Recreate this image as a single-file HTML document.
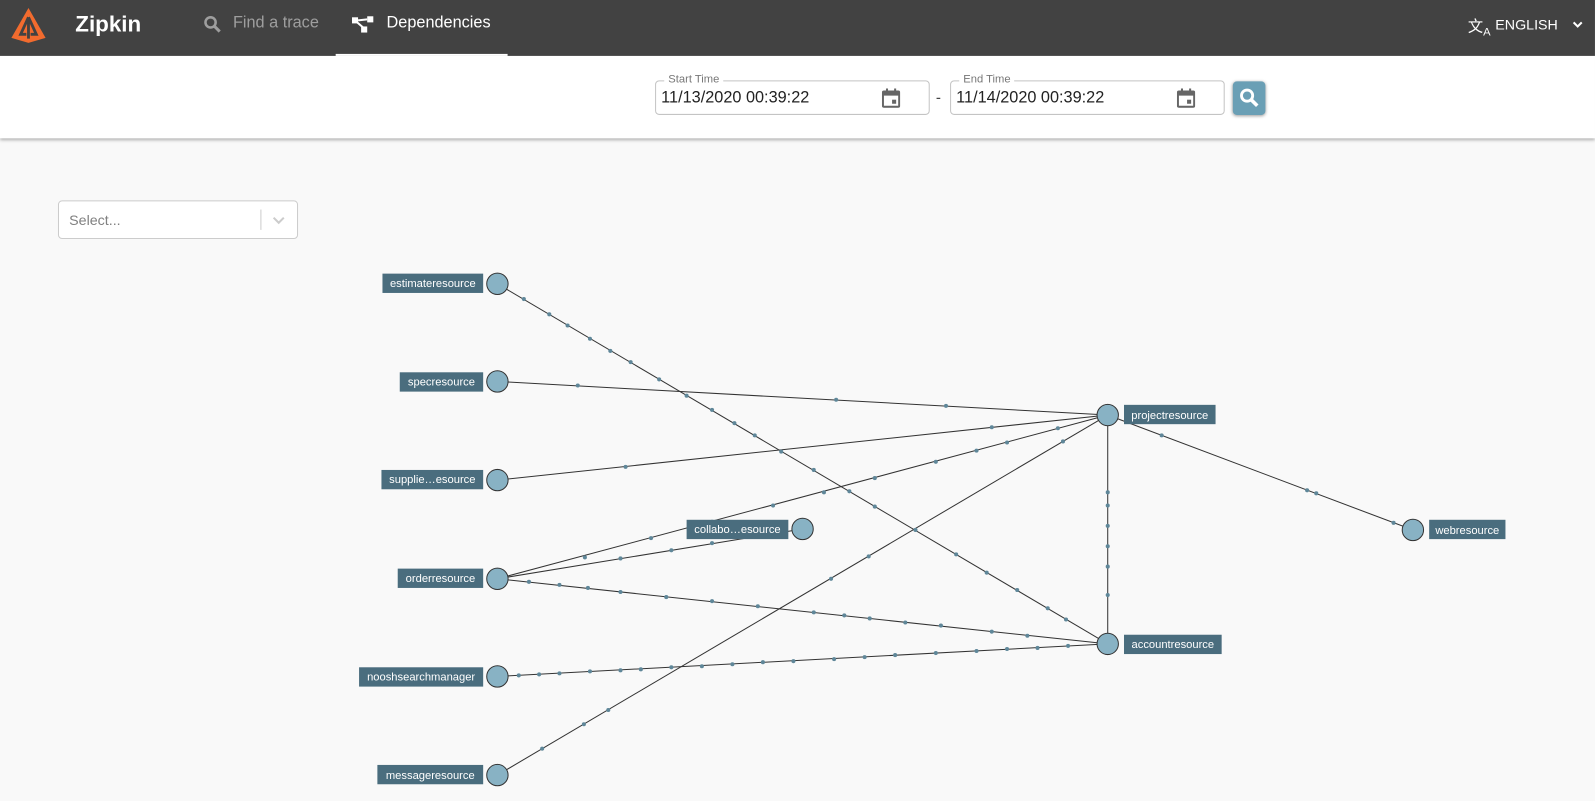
<!DOCTYPE html>
<html><head><meta charset="utf-8"><style>
*{box-sizing:border-box;margin:0;padding:0}
html,body{width:1595px;height:801px;overflow:hidden}
body{background:#f9f9f9;font-family:"Liberation Sans",Arial,sans-serif;position:relative}
#w{position:absolute;left:0;top:0;width:1568px;height:788px;transform:scale(1.0172);transform-origin:0 0}
.top{position:absolute;left:0;top:0;width:1568px;height:55px;background:#424242;color:#fff}
.brand{position:absolute;left:74px;top:11px;font-size:22px;font-weight:bold}
.find{position:absolute;left:198px;top:14px;font-size:16px;color:#9e9e9e}
.dep{position:absolute;left:330px;top:0;width:169px;height:55px;border-bottom:2px solid #fff}
.dep span{position:absolute;left:50px;top:14px;font-size:16px}
.lang{position:absolute;left:1470px;top:16px;font-size:14px}
.bar{position:absolute;left:0;top:55px;width:1568px;height:81px;background:#fff;box-shadow:0 2px 3px rgba(0,0,0,.3)}
.field{position:absolute;top:79px;height:34px;border:1px solid #c4c4c4;border-radius:4px;background:#fff}
.field .v{position:absolute;left:5px;top:8px;font-size:16px;color:#222}
.field .l{position:absolute;left:8px;top:-8px;font-size:11px;color:#777;background:#fff;padding:0 4px}
.cal{position:absolute;right:28px;top:7px;width:18px;height:19px}
.sbtn{position:absolute;left:1212px;top:80px;width:32px;height:33px;background:#6a9fb5;border-radius:4px;box-shadow:0 1px 3px rgba(0,0,0,.4)}
.sel{position:absolute;left:57px;top:197px;width:236px;height:38px;border:1px solid #ccc;border-radius:4px;background:#fff}
.sel span{position:absolute;left:10px;top:10px;font-size:14px;color:#808080}
.sel i{position:absolute;left:198px;top:8px;width:1px;height:20px;background:#ccc}
</style></head><body><div id="w">
<div class="top">
<svg style="position:absolute;left:7px;top:4px" width="42" height="42" viewBox="0 0 60 55"><path d="M30 3 L54 45 L30 52 L6 45 Z" fill="#f26b2e"/><path d="M30 16 L30 46 M30 16 L19 40 L27 40 M30 16 L41 40 L33 40" stroke="#424242" stroke-width="4" fill="none"/></svg>
<div class="brand">Zipkin</div>
<svg style="position:absolute;left:200px;top:15px" width="18" height="18" viewBox="0 0 18 18"><circle cx="7" cy="7" r="5" stroke="#9e9e9e" stroke-width="2.5" fill="none"/><path d="M11 11 L16 16" stroke="#9e9e9e" stroke-width="3"/></svg>
<div class="find" style="left:229px">Find a trace</div>
<div class="dep"><svg style="position:absolute;left:16px;top:15px" width="22" height="18" viewBox="0 0 22 18"><rect x="0" y="2" width="6" height="6" fill="#fff"/><rect x="15" y="1" width="6" height="6" fill="#fff"/><rect x="9" y="11" width="6" height="6" fill="#fff"/><path d="M6 5 L15 4 M4 6 L11 12" stroke="#fff" stroke-width="2"/></svg><span>Dependencies</span></div>
<div style="position:absolute;left:1443px;top:15px;font-size:15px">文<sub style="font-size:11px">A</sub></div>
<div class="lang">ENGLISH</div>
<svg style="position:absolute;left:1545px;top:19px" width="12" height="10" viewBox="0 0 12 10"><path d="M2 3 L6 7 L10 3" stroke="#fff" stroke-width="2" fill="none"/></svg>
</div>
<div class="bar"></div>
<div class="field" style="left:644px;width:270px"><div class="l">Start Time</div><div class="v">11/13/2020 00:39:22</div><svg class="cal" viewBox="0 0 18 19"><rect x="1" y="3" width="16" height="15" rx="1" fill="none" stroke="#666" stroke-width="2"/><rect x="1" y="3" width="16" height="4" fill="#666"/><rect x="4" y="0" width="2" height="4" fill="#666"/><rect x="12" y="0" width="2" height="4" fill="#666"/><rect x="10" y="11" width="4" height="4" fill="#666"/></svg></div>
<div style="position:absolute;left:920px;top:88px;font-size:15px;color:#444">-</div>
<div class="field" style="left:934px;width:270px"><div class="l">End Time</div><div class="v">11/14/2020 00:39:22</div><svg class="cal" viewBox="0 0 18 19"><rect x="1" y="3" width="16" height="15" rx="1" fill="none" stroke="#666" stroke-width="2"/><rect x="1" y="3" width="16" height="4" fill="#666"/><rect x="4" y="0" width="2" height="4" fill="#666"/><rect x="12" y="0" width="2" height="4" fill="#666"/><rect x="10" y="11" width="4" height="4" fill="#666"/></svg></div>
<div class="sbtn"><svg style="position:absolute;left:6px;top:6px" width="20" height="20" viewBox="0 0 20 20"><circle cx="8" cy="8" r="5.5" stroke="#fff" stroke-width="2.8" fill="none"/><path d="M12 12 L18 18" stroke="#fff" stroke-width="3.5"/></svg></div>
<div class="sel"><span>Select...</span><i></i><svg style="position:absolute;left:209px;top:14px" width="14" height="10" viewBox="0 0 14 10"><path d="M2 2 L7 7 L12 2" stroke="#ccc" stroke-width="2" fill="none"/></svg></div>
<svg style="position:absolute;left:0;top:0" width="1568" height="788" font-family="Liberation Sans, Arial, sans-serif" font-size="11">
<g stroke="#333" stroke-width="1" fill="none">
<line x1="489" y1="279" x2="1089" y2="633"/>
<line x1="489" y1="375" x2="1089" y2="408"/>
<line x1="489" y1="472" x2="1089" y2="408"/>
<line x1="489" y1="569" x2="1089" y2="408"/>
<line x1="489" y1="569" x2="789" y2="520"/>
<line x1="489" y1="569" x2="1089" y2="633"/>
<line x1="489" y1="665" x2="1089" y2="633"/>
<line x1="489" y1="762" x2="1089" y2="408"/>
<line x1="1089" y1="408" x2="1089" y2="633"/>
<line x1="1089" y1="408" x2="1389" y2="521"/>
</g>
<g fill="#5f8799">
<circle cx="515" cy="294" r="2"/><circle cx="540" cy="309" r="2"/><circle cx="558" cy="320" r="2"/><circle cx="580" cy="333" r="2"/><circle cx="600" cy="345" r="2"/><circle cx="620" cy="356" r="2"/><circle cx="648" cy="373" r="2"/><circle cx="675" cy="389" r="2"/><circle cx="700" cy="403" r="2"/><circle cx="722" cy="416" r="2"/><circle cx="742" cy="428" r="2"/><circle cx="768" cy="444" r="2"/><circle cx="800" cy="462" r="2"/><circle cx="835" cy="483" r="2"/><circle cx="860" cy="498" r="2"/><circle cx="900" cy="521" r="2"/><circle cx="940" cy="545" r="2"/><circle cx="970" cy="563" r="2"/><circle cx="1000" cy="580" r="2"/><circle cx="1030" cy="598" r="2"/><circle cx="1048" cy="609" r="2"/>
<circle cx="568" cy="379" r="2"/><circle cx="822" cy="393" r="2"/><circle cx="930" cy="399" r="2"/>
<circle cx="615" cy="459" r="2"/><circle cx="975" cy="420" r="2"/>
<circle cx="575" cy="548" r="2"/><circle cx="640" cy="529" r="2"/><circle cx="700" cy="513" r="2"/><circle cx="760" cy="497" r="2"/><circle cx="810" cy="484" r="2"/><circle cx="860" cy="470" r="2"/><circle cx="920" cy="454" r="2"/><circle cx="960" cy="443" r="2"/><circle cx="990" cy="435" r="2"/><circle cx="1040" cy="421" r="2"/>
<circle cx="610" cy="549" r="2"/><circle cx="660" cy="541" r="2"/><circle cx="700" cy="534" r="2"/>
<circle cx="520" cy="572" r="2"/><circle cx="550" cy="575" r="2"/><circle cx="578" cy="578" r="2"/><circle cx="610" cy="582" r="2"/><circle cx="655" cy="587" r="2"/><circle cx="700" cy="591" r="2"/><circle cx="745" cy="596" r="2"/><circle cx="800" cy="602" r="2"/><circle cx="830" cy="605" r="2"/><circle cx="855" cy="608" r="2"/><circle cx="890" cy="612" r="2"/><circle cx="925" cy="615" r="2"/><circle cx="975" cy="621" r="2"/><circle cx="1010" cy="625" r="2"/>
<circle cx="510" cy="664" r="2"/><circle cx="530" cy="663" r="2"/><circle cx="550" cy="662" r="2"/><circle cx="580" cy="660" r="2"/><circle cx="610" cy="659" r="2"/><circle cx="630" cy="658" r="2"/><circle cx="660" cy="656" r="2"/><circle cx="690" cy="655" r="2"/><circle cx="720" cy="653" r="2"/><circle cx="750" cy="651" r="2"/><circle cx="780" cy="650" r="2"/><circle cx="820" cy="648" r="2"/><circle cx="850" cy="646" r="2"/><circle cx="880" cy="644" r="2"/><circle cx="920" cy="642" r="2"/><circle cx="960" cy="640" r="2"/><circle cx="990" cy="638" r="2"/><circle cx="1020" cy="637" r="2"/><circle cx="1050" cy="635" r="2"/>
<circle cx="533" cy="736" r="2"/><circle cx="574" cy="712" r="2"/><circle cx="598" cy="698" r="2"/><circle cx="817" cy="569" r="2"/><circle cx="854" cy="547" r="2"/><circle cx="1045" cy="434" r="2"/>
<circle cx="1089" cy="484" r="2"/><circle cx="1089" cy="497" r="2"/><circle cx="1089" cy="517" r="2"/><circle cx="1089" cy="537" r="2"/><circle cx="1089" cy="557" r="2"/><circle cx="1089" cy="585" r="2"/>
<circle cx="1142" cy="428" r="2"/><circle cx="1285" cy="482" r="2"/><circle cx="1294" cy="485" r="2"/><circle cx="1370" cy="514" r="2"/>
</g>
<g fill="#88b2c4" stroke="#333" stroke-width="1">
<circle cx="489" cy="279" r="10.5"/><circle cx="489" cy="375" r="10.5"/><circle cx="489" cy="472" r="10.5"/><circle cx="789" cy="520" r="10.5"/><circle cx="489" cy="569" r="10.5"/><circle cx="489" cy="665" r="10.5"/><circle cx="489" cy="762" r="10.5"/><circle cx="1089" cy="408" r="10.5"/><circle cx="1089" cy="633" r="10.5"/><circle cx="1389" cy="521" r="10.5"/>
</g>
<g fill="#4a6d7e">
<rect x="376" y="269" width="99" height="19"/><rect x="393" y="366" width="82" height="19"/><rect x="375" y="462" width="100" height="19"/><rect x="675" y="511" width="100" height="19"/><rect x="391" y="559" width="84" height="19"/><rect x="353" y="656" width="122" height="19"/><rect x="371" y="752" width="104" height="19"/><rect x="1105" y="398" width="90" height="19"/><rect x="1105" y="624" width="96" height="19"/><rect x="1405" y="511" width="75" height="19"/>
</g>
<g fill="#fff" text-anchor="middle">
<text x="425.5" y="282">estimateresource</text><text x="434" y="379">specresource</text><text x="425" y="475">supplie…esource</text><text x="725" y="524">collabo…esource</text><text x="433" y="572">orderresource</text><text x="414" y="669">nooshsearchmanager</text><text x="423" y="766">messageresource</text><text x="1150" y="412">projectresource</text><text x="1153" y="637">accountresource</text><text x="1442.5" y="525">webresource</text>
</g>
</svg>
</div></body></html>
